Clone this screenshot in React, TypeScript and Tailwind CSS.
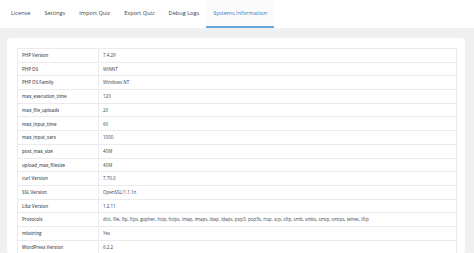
import React from 'react';

const tabs = ['License', 'Settings', 'Import Quiz', 'Export Quiz', 'Debug Logs', 'Systems Information'];

const rows: [string, string][] = [
  ['PHP Version', '7.4.29'],
  ['PHP OS', 'WINNT'],
  ['PHP OS Family', 'Windows NT'],
  ['max_execution_time', '120'],
  ['max_file_uploads', '20'],
  ['max_input_time', '60'],
  ['max_input_vars', '1000'],
  ['post_max_size', '40M'],
  ['upload_max_filesize', '40M'],
  ['curl Version', '7.70.0'],
  ['SSL Version', 'OpenSSL/1.1.1n'],
  ['Libz Version', '1.2.11'],
  [
    'Protocols',
    'dict, file, ftp, ftps, gopher, http, https, imap, imaps, ldap, ldaps, pop3, pop3s, rtsp, scp, sftp, smb, smbs, smtp, smtps, telnet, tftp',
  ],
  ['mbstring', 'Yes'],
  ['WordPress Version', '6.2.2'],
];

export default function App() {
  return (
    <div className="w-[474px] h-[253px] overflow-hidden bg-white text-[#3c434a]" style={{ fontFamily: '"Open Sans", "Liberation Sans", sans-serif' }}>
      {/* Tabs */}
      <div className="flex h-[28px] pl-[4px] bg-white">
        {tabs.map((t, i) => {
          const active = i === tabs.length - 1;
          return (
            <div
              key={t}
              className={
                active
                  ? 'flex items-center px-[7px] text-[5.6px] text-[#2a7bbf] bg-[#fbfbfc] border-b-2 border-[#6aa6d6]'
                  : 'flex items-center px-[7px] text-[5.6px] text-[#3c434a] border-b-2 border-transparent'
              }
            >
              {t}
            </div>
          );
        })}
      </div>

      {/* Content */}
      <div className="bg-[#f0f0f1] pt-[10px] pl-[7px] pr-[9px] h-full">
        <div className="bg-white rounded-[4px] pt-[10px] pl-[10px] pr-[8px]">
          <table className="w-full border-collapse text-[4.5px]">
            <tbody>
              {rows.map(([k, v]) => (
                <tr key={k} className="h-[13.7px]">
                  <td className="w-[81px] border border-[#ebebee] pl-[4px] font-semibold text-[#50575e] leading-none">{k}</td>
                  <td className="border border-[#ebebee] pl-[4px] text-[#3c434a] leading-none">{v}</td>
                </tr>
              ))}
            </tbody>
          </table>
        </div>
      </div>
    </div>
  );
}
